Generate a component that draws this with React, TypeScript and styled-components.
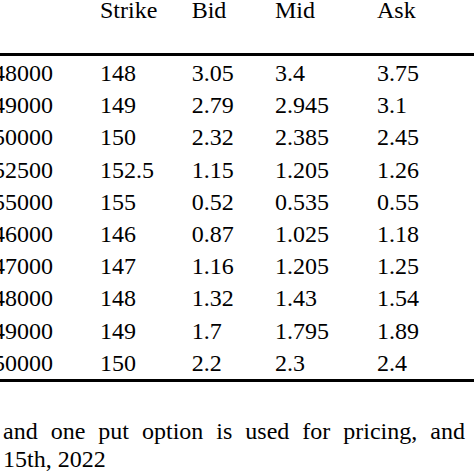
import { createGlobalStyle, styled } from "styled-components";

const GlobalStyle = createGlobalStyle`
  html, body {
    margin: 0;
    background: #fff;
    overflow: hidden;
  }
  body {
    font-family: "Liberation Serif", "Times New Roman", serif;
    color: #000;
  }
`;

const Page = styled.div`
  width: 474px;
  height: 474px;
  overflow: hidden;
`;

const Table = styled.table`
  width: 100%;
  table-layout: fixed;
  border-collapse: collapse;
  font-size: 24px;
`;

const Head = styled.thead`
  border-bottom: 3px solid #000;
`;

const Body = styled.tbody`
  border-bottom: 3px solid #000;

  & tr:first-child td {
    padding-top: 1px;
  }
`;

const HeadCell = styled.th`
  padding: 0 0 33px 0;
  line-height: 20px;
  font-weight: normal;
  text-align: left;
  white-space: nowrap;
`;

const Cell = styled.td`
  padding: 0;
  height: 32.2px;
  line-height: 32.2px;
  text-align: left;
  white-space: nowrap;
`;

// the option code column is cut off by the crop on its left side
const CodeCell = styled(Cell)`
  overflow: hidden;
  direction: rtl;
  text-align: start;
  padding-right: 47px;
`;

const Caption = styled.div`
  margin-top: 35px;
  padding-left: 3px;
  font-size: 24px;
  line-height: 28px;
  white-space: nowrap;
`;

const CaptionLine = styled.div<{ $spread?: boolean }>`
  word-spacing: ${(p) => (p.$spread ? "7px" : "normal")};
`;

type Row = { code: string; strike: string; bid: string; mid: string; ask: string };

const rows: Row[] = [
  { code: "AAPL220415C00148000", strike: "148", bid: "3.05", mid: "3.4", ask: "3.75" },
  { code: "AAPL220415C00149000", strike: "149", bid: "2.79", mid: "2.945", ask: "3.1" },
  { code: "AAPL220415C00150000", strike: "150", bid: "2.32", mid: "2.385", ask: "2.45" },
  { code: "AAPL220415C00152500", strike: "152.5", bid: "1.15", mid: "1.205", ask: "1.26" },
  { code: "AAPL220415C00155000", strike: "155", bid: "0.52", mid: "0.535", ask: "0.55" },
  { code: "AAPL220415P0146000", strike: "146", bid: "0.87", mid: "1.025", ask: "1.18" },
  { code: "AAPL220415P0147000", strike: "147", bid: "1.16", mid: "1.205", ask: "1.25" },
  { code: "AAPL220415P0148000", strike: "148", bid: "1.32", mid: "1.43", ask: "1.54" },
  { code: "AAPL220415P0149000", strike: "149", bid: "1.7", mid: "1.795", ask: "1.89" },
  { code: "AAPL220415P0150000", strike: "150", bid: "2.2", mid: "2.3", ask: "2.4" },
];

export default function App() {
  return (
    <Page>
      <GlobalStyle />
      <Table>
        <colgroup>
          <col style={{ width: 100 }} />
          <col style={{ width: 91.7 }} />
          <col style={{ width: 83.3 }} />
          <col style={{ width: 102 }} />
          <col />
        </colgroup>
        <Head>
          <tr>
            <HeadCell />
            <HeadCell>Strike</HeadCell>
            <HeadCell>Bid</HeadCell>
            <HeadCell>Mid</HeadCell>
            <HeadCell>Ask</HeadCell>
          </tr>
        </Head>
        <Body>
          {rows.map((r, i) => (
            <tr key={i}>
              <CodeCell>{r.code}</CodeCell>
              <Cell>{r.strike}</Cell>
              <Cell>{r.bid}</Cell>
              <Cell>{r.mid}</Cell>
              <Cell>{r.ask}</Cell>
            </tr>
          ))}
        </Body>
      </Table>
      <Caption>
        <CaptionLine $spread>and one put option is used for pricing, and the data is from April</CaptionLine>
        <CaptionLine>15th, 2022</CaptionLine>
      </Caption>
    </Page>
  );
}
